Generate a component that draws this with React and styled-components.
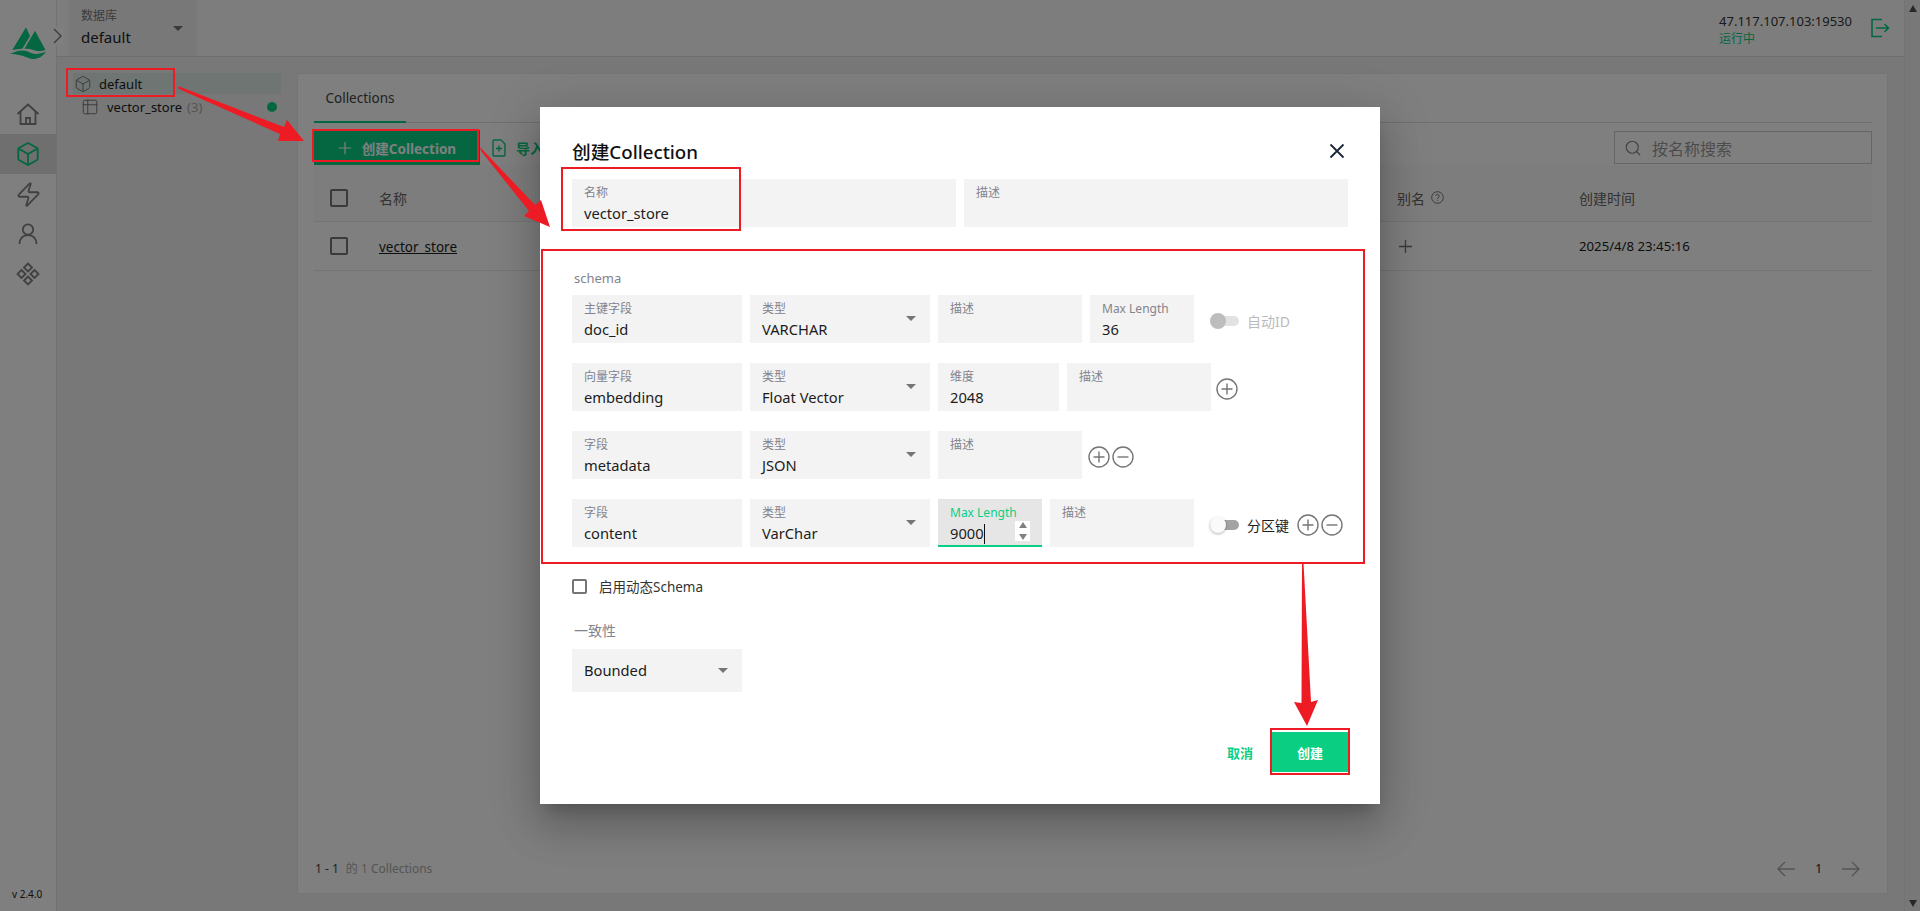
import React from 'react';
import styled, { createGlobalStyle } from 'styled-components';
import { Box, Zap, Search, Table2 } from 'lucide-react';

const GlobalStyle = createGlobalStyle`
  html, body {
    margin: 0;
    padding: 0;
    overflow: hidden;
    background: #f0f0f0;
    font-family: "Noto Sans", "Noto Sans CJK SC", sans-serif;
    color: #1c1c1c;
  }
  * { box-sizing: border-box; }
`;

const green = '#0acf83';

const Page = styled.div`
  width: 1920px;
  height: 911px;
  display: flex;
  position: relative;
  overflow: hidden;
`;

const Sidebar = styled.aside`
  width: 57px;
  flex: none;
  background: #fff;
  border-right: 1px solid #e4e4e4;
  display: flex;
  flex-direction: column;
  position: relative;
`;

const LogoWrap = styled.div`
  height: 94px;
  padding: 26px 0 0 9px;
`;

const NavItem = styled.div`
  height: 40px;
  display: flex;
  align-items: center;
  justify-content: center;
  color: ${p => (p.$active ? green : '#808080')};
  background: ${p => (p.$active ? '#dedede' : 'transparent')};
`;

const Version = styled.div`
  margin-top: auto;
  padding: 0 0 9px 12px;
  font-size: 10px;
  line-height: 16px;
  color: #222;
`;

const CollapseButton = styled.div`
  position: absolute;
  left: 50px;
  top: 27px;
  width: 14px;
  height: 18px;
  background: #fff;
  color: #777;
  display: flex;
  align-items: center;
  justify-content: center;
  z-index: 2;
`;

const Main = styled.div`
  flex: 1;
  min-width: 0;
  display: flex;
  flex-direction: column;
`;

const Header = styled.header`
  height: 57px;
  flex: none;
  background: #fbfbfb;
  border-bottom: 1px solid #dcdcdc;
  display: flex;
  justify-content: space-between;
  padding: 0 14px 0 12px;
`;

const DbSelect = styled.div`
  width: 128px;
  height: 56px;
  background: #f1f1f1;
  padding: 8px 0 0 12px;
  position: relative;
`;

const DbLabel = styled.div`
  font-size: 12px;
  line-height: 16px;
  color: #777;
`;

const DbValue = styled.div`
  font-size: 15px;
  line-height: 26px;
  color: #222;
`;

const Caret = styled.span`
  position: absolute;
  right: ${p => p.$right}px;
  top: ${p => p.$top};
  width: 0;
  height: 0;
  border-left: 5px solid transparent;
  border-right: 5px solid transparent;
  border-top: 5px solid #757575;
`;

const Connection = styled.div`
  display: flex;
  align-items: center;
  gap: 18px;
`;

const ConnectionInfo = styled.div`
  margin-top: 4px;
`;

const ConnectionText = styled.div`
  font-size: 13px;
  line-height: 18px;
  color: #333;
`;

const ConnectionState = styled.div`
  font-size: 12px;
  line-height: 18px;
  color: ${green};
`;

const Body = styled.div`
  flex: 1;
  display: flex;
  padding: 16px 16px 17px 0;
  min-height: 0;
`;

const Tree = styled.nav`
  width: 240px;
  flex: none;
  padding: 0 16px 0 16px;
`;

const TreeRow = styled.div`
  height: ${p => p.$h}px;
  display: flex;
  align-items: center;
  font-size: 13px;
  color: #1c1c1c;
  padding-left: ${p => p.$indent}px;
  background: ${p => (p.$active ? '#dcebe5' : 'transparent')};
  gap: ${p => p.$gap}px;
`;

const TreeCount = styled.span`
  color: #aaa;
  margin-left: 5px;
`;

const StatusDot = styled.span`
  width: 10px;
  height: 10px;
  border-radius: 50%;
  background: ${green};
  margin-left: auto;
  margin-right: 4px;
`;

const Card = styled.section`
  flex: 1;
  min-width: 0;
  background: #fff;
  border: 1px solid #e8e8e8;
  padding: 0 15px 0 16px;
  display: flex;
  flex-direction: column;
`;

const Tabs = styled.div`
  height: 49px;
  flex: none;
  border-bottom: 1px solid #dcdcdc;
  display: flex;
`;

const Tab = styled.div`
  width: 92px;
  height: 49px;
  border-bottom: 2px solid ${green};
  font-size: 13.5px;
  line-height: 48px;
  text-align: center;
  color: #444;
`;

const Toolbar = styled.div`
  margin-top: 7px;
  height: 35px;
  flex: none;
  display: flex;
  align-items: flex-start;
`;

const CreateButton = styled.div`
  width: 166px;
  height: 35px;
  background: ${green};
  color: #fff;
  display: flex;
  align-items: center;
  justify-content: center;
  gap: 10px;
  font-size: 13.5px;
  font-weight: 700;
`;

const ImportButton = styled.div`
  margin-left: 12px;
  height: 35px;
  display: flex;
  align-items: center;
  gap: 10px;
  color: ${green};
  font-size: 14px;
  font-weight: 700;
`;

const SearchBox = styled.div`
  margin: 1px 0 0 auto;
  width: 258px;
  height: 33px;
  border: 1px solid #ccc;
  display: flex;
  align-items: center;
  gap: 10px;
  padding-left: 9px;
  color: #999;
  font-size: 16px;
`;

const TableRow = styled.div`
  display: grid;
  grid-template-columns: 65px 1018px 182px 1fr;
  height: ${p => p.$h}px;
  flex: none;
  align-items: center;
  border-bottom: 1px solid #e6e6e6;
  background: ${p => (p.$head ? '#fbfbfb' : '#fff')};
  padding-top: ${p => (p.$head ? 9 : 0)}px;
  font-size: 14px;
  color: ${p => (p.$head ? '#666' : '#1c1c1c')};
`;

const CellCheck = styled.div`
  padding-left: 16px;
`;

const Check = styled.span`
  display: block;
  width: ${p => p.$size}px;
  height: ${p => p.$size}px;
  border: 2px solid #757575;
  border-radius: 2px;
`;

const NameLink = styled.span`
  text-decoration: underline;
  font-size: 13.5px;
`;

const DateCell = styled.div`
  font-size: 13.2px;
`;

const AliasHead = styled.div`
  display: flex;
  align-items: center;
  gap: 6px;
`;

const AddAlias = styled.div`
  color: #777;
  padding-left: 1px;
  display: flex;
`;

const CardFooter = styled.div`
  margin-top: auto;
  height: 33px;
  flex: none;
  display: flex;
  align-items: flex-start;
  justify-content: space-between;
  font-size: 12px;
  line-height: 18px;
  padding-left: 1px;
  color: #aaa;
`;

const RangeText = styled.span`
  color: #444;
  margin-right: 7px;
`;

const Pager = styled.div`
  display: flex;
  align-items: center;
  gap: 20px;
  padding-right: 12px;
  color: #222;
`;

const ArrowBtn = styled.span`
  display: flex;
  color: #aaa;
`;

const Scrollbar = styled.div`
  width: 16px;
  flex: none;
  background: #f1f1f1;
  border-left: 1px solid #e8e8e8;
  display: flex;
  flex-direction: column;
  justify-content: space-between;
  align-items: center;
  padding: 5px 0 4px;
`;

const ScrollArrow = styled.span`
  width: 0;
  height: 0;
  border-left: 4.5px solid transparent;
  border-right: 4.5px solid transparent;
  border-${p => (p.$up ? 'bottom' : 'top')}: 7px solid #505050;
`;

/* modal */

const Overlay = styled.div`
  position: absolute;
  inset: 0;
  background: rgba(0, 0, 0, 0.5);
  display: flex;
  align-items: center;
  justify-content: center;
  z-index: 5;
`;

const Modal = styled.div`
  width: 840px;
  height: 697px;
  background: #fff;
  padding: 0 32px;
  display: flex;
  flex-direction: column;
  box-shadow: 0 11px 15px -7px rgba(0, 0, 0, 0.2), 0 24px 38px 3px rgba(0, 0, 0, 0.14), 0 9px 46px 8px rgba(0, 0, 0, 0.12);
`;

const ModalHead = styled.div`
  height: 72px;
  flex: none;
  display: flex;
  justify-content: space-between;
  padding-top: 32px;
`;

const ModalTitle = styled.div`
  font-size: 18.7px;
  line-height: 26px;
  font-weight: 500;
  color: #111;
`;

const CloseButton = styled.div`
  margin: 3px 3px 0 0;
  color: #1b2638;
  height: 20px;
`;

const Row = styled.div`
  display: flex;
  gap: 8px;
  align-items: center;
  height: 48px;
  flex: none;
`;

const Field = styled.div`
  width: ${p => p.$w}px;
  flex: ${p => (p.$w ? 'none' : 1)};
  height: ${p => p.$h || 48}px;
  background: ${p => (p.$focus ? '#e6e6e6' : '#f3f3f3')};
  border-bottom: ${p => (p.$focus ? `2px solid ${green}` : 'none')};
  padding: 6px 12px 0;
  position: relative;
`;

const FieldLabel = styled.div`
  font-size: 12px;
  line-height: 16px;
  color: ${p => (p.$focus ? green : '#82838e')};
`;

const FieldValue = styled.div`
  font-size: 14.7px;
  line-height: 24px;
  margin-top: ${p => p.$mt ?? 0}px;
  color: #1c1c1c;
`;

const TextCursor = styled.span`
  display: inline-block;
  width: 1px;
  height: 20px;
  background: #111;
  vertical-align: -5px;
`;

const Spinner = styled.div`
  position: absolute;
  right: 12px;
  top: 22px;
  width: 15px;
  height: 20px;
  background: #fff;
  display: flex;
  flex-direction: column;
  align-items: center;
  justify-content: space-between;
  padding: 1px 0;
`;

const SpinArrow = styled.span`
  width: 0;
  height: 0;
  border-left: 4px solid transparent;
  border-right: 4px solid transparent;
  border-${p => (p.$up ? 'bottom' : 'top')}: 6px solid #808080;
`;

const SectionLabel = styled.div`
  font-size: ${p => p.$size}px;
  line-height: 16px;
  color: #82838e;
  padding-left: 2px;
  margin-top: ${p => p.$mt}px;
  margin-bottom: ${p => p.$mb}px;
`;

const RowGroup = styled.div`
  display: flex;
  flex-direction: column;
  gap: 20px;
`;

const Side = styled.div`
  display: flex;
  align-items: center;
  margin-top: 4px;
  margin-left: ${p => p.$ml}px;
`;

const ToggleTrack = styled.span`
  width: 29px;
  height: 10px;
  border-radius: 5px;
  background: ${p => (p.$disabled ? '#e2e2e2' : '#a3a3a3')};
  position: relative;
  display: block;
  flex: none;
`;

const ToggleThumb = styled.span`
  position: absolute;
  left: 0;
  top: -3px;
  width: 16px;
  height: 16px;
  border-radius: 50%;
  background: ${p => (p.$disabled ? '#bdbdbd' : '#fafafa')};
  box-shadow: ${p => (p.$disabled ? 'none' : '0 1px 3px rgba(0,0,0,.3)')};
`;

const ToggleText = styled.span`
  margin-left: 8px;
  width: ${p => p.$w}px;
  font-size: 14px;
  white-space: nowrap;
  color: ${p => (p.$disabled ? '#bbb' : '#1c1c1c')};
`;

const CircleBtn = styled.svg`
  width: 24px;
  height: 24px;
  display: block;
  flex: none;
  color: #757575;
`;

const DynamicRow = styled.div`
  display: flex;
  align-items: center;
  margin-top: 29px;
  height: 20px;
  font-size: 13.5px;
  color: #333;
  gap: 12px;
`;

const FooterBar = styled.div`
  margin-top: 40px;
  display: flex;
  justify-content: flex-end;
  align-items: center;
  gap: 19px;
`;

const CancelBtn = styled.div`
  font-size: 13px;
  font-weight: 700;
  color: ${green};
`;

const SubmitBtn = styled.div`
  width: 76px;
  height: 40px;
  background: ${green};
  color: #fff;
  font-size: 13px;
  font-weight: 700;
  display: flex;
  align-items: center;
  justify-content: center;
`;

/* red annotations drawn on top of the screenshot */

const Mark = styled.div`
  position: absolute;
  left: ${p => p.$x}px;
  top: ${p => p.$y}px;
  width: ${p => p.$w}px;
  height: ${p => p.$h}px;
  border: 2px solid #ed1c24;
  z-index: 10;
`;

const ArrowLayer = styled.svg`
  position: absolute;
  left: 0;
  top: 0;
  width: 1920px;
  height: 911px;
  z-index: 10;
  pointer-events: none;
`;

const Logo = () => (
  <svg width="38" height="34" viewBox="0 0 38 34" fill="#0acf83">
    <path d="M17 1.3 L21 10 L13.5 22.5 L3.3 24 Z" />
    <path d="M26 4.7 L36.5 24 C32 25.5 28 25.5 24 24 C21 23 18 22.5 15.3 23 Z" />
    <path d="M1 28 C6 25.5 10 24.5 13 24.5 C19 24.5 22 28 27 28 C30.5 28 34 27 37 25.5 C34 30.5 29 33 24 33 C19 33 16 28.5 1 28 Z" />
  </svg>
);

const HomeIcon = () => (
  <svg width="24" height="24" viewBox="0 0 24 24" fill="none" stroke="currentColor" strokeWidth="1.8">
    <path d="M1.5 12 L12 2.5 L22.5 12" />
    <path d="M4.5 9.5 V22 H19.5 V9.5" />
    <path d="M10 22 V16 H14 V22" />
  </svg>
);

const UserIcon = () => (
  <svg width="24" height="24" viewBox="0 0 24 24" fill="none" stroke="currentColor" strokeWidth="1.8">
    <circle cx="12" cy="7.5" r="5.2" />
    <path d="M3.5 22 C3.5 16.5 7 13 12 13 C17 13 20.5 16.5 20.5 22" />
  </svg>
);

const DiamondsIcon = () => (
  <svg width="24" height="24" viewBox="0 0 24 24" fill="none" stroke="currentColor" strokeWidth="1.8">
    <path d="M12 1.5 l4 4 -4 4 -4 -4 z" />
    <path d="M12 14.5 l4 4 -4 4 -4 -4 z" />
    <path d="M5.5 8 l4 4 -4 4 -4 -4 z" />
    <path d="M18.5 8 l4 4 -4 4 -4 -4 z" />
  </svg>
);

const LogoutIcon = () => (
  <svg width="20" height="20" viewBox="0 0 20 20" fill="none" stroke={green} strokeWidth="1.6">
    <path d="M12 1.5 H2 V18.5 H12" />
    <path d="M6 10 H18.5 M14.5 6 L18.5 10 L14.5 14" />
  </svg>
);

const FilePlusIcon = () => (
  <svg width="14" height="18" viewBox="0 0 14 18" fill="none" stroke="currentColor" strokeWidth="1.4">
    <path d="M1 2 a1 1 0 0 1 1 -1 H9 L13 5 V16 a1 1 0 0 1 -1 1 H2 a1 1 0 0 1 -1 -1 Z" />
    <path d="M4 9.5 H10 M7 6.5 V12.5" />
  </svg>
);

const HelpIcon = () => (
  <svg width="13" height="13" viewBox="0 0 13 13" fill="none" stroke="#666" strokeWidth="0.9">
    <circle cx="6.5" cy="6.5" r="5.8" />
    <path d="M4.8 5 a1.7 1.7 0 1 1 2.6 1.5 c-.6 .4 -.9 .7 -.9 1.5 M6.5 9.2 V10" />
  </svg>
);

const PlusLines = ({ size = 16, width = 1.4 }) => (
  <svg width={size} height={size} viewBox="0 0 16 16" fill="none" stroke="currentColor" strokeWidth={width}>
    <path d="M8 1 V15 M1 8 H15" />
  </svg>
);

const PagerArrow = ({ flip }) => (
  <svg width="18" height="16" viewBox="0 0 18 16" fill="none" stroke="currentColor" strokeWidth="1.4">
    {flip ? <path d="M0 8 H17 M10 1 L17 8 L10 15" /> : <path d="M18 8 H1 M8 1 L1 8 L8 15" />}
  </svg>
);

const CirclePlus = () => (
  <CircleBtn viewBox="0 0 24 24" fill="none" stroke="currentColor" strokeWidth="1.4">
    <circle cx="12" cy="12" r="10" />
    <path d="M12 6.5 V17.5 M6.5 12 H17.5" />
  </CircleBtn>
);

const CircleMinus = () => (
  <CircleBtn viewBox="0 0 24 24" fill="none" stroke="currentColor" strokeWidth="1.4">
    <circle cx="12" cy="12" r="10" />
    <path d="M6.5 12 H17.5" />
  </CircleBtn>
);

const TextField = ({ label, value, w, focus, children }) => (
  <Field $w={w} $focus={focus}>
    <FieldLabel $focus={focus}>{label}</FieldLabel>
    <FieldValue>{value}{children}</FieldValue>
  </Field>
);

const SelectField = ({ label, value }) => (
  <Field $w={180}>
    <FieldLabel>{label}</FieldLabel>
    <FieldValue>{value}</FieldValue>
    <Caret $right={14} $top="21px" />
  </Field>
);

const Toggle = ({ disabled, label, w }) => (
  <>
    <ToggleTrack $disabled={disabled}><ToggleThumb $disabled={disabled} /></ToggleTrack>
    <ToggleText $disabled={disabled} $w={w}>{label}</ToggleText>
  </>
);

export default function App() {
  return (
    <Page>
      <GlobalStyle />
      <Sidebar>
        <LogoWrap><Logo /></LogoWrap>
        <NavItem><HomeIcon /></NavItem>
        <NavItem $active><Box size={26} strokeWidth={1.7} /></NavItem>
        <NavItem><Zap size={27} strokeWidth={1.6} /></NavItem>
        <NavItem><UserIcon /></NavItem>
        <NavItem><DiamondsIcon /></NavItem>
        <Version>v 2.4.0</Version>
        <CollapseButton>
          <svg width="9" height="16" viewBox="0 0 9 16" fill="none" stroke="currentColor" strokeWidth="1.4">
            <path d="M1 1 L8 8 L1 15" />
          </svg>
        </CollapseButton>
      </Sidebar>

      <Main>
        <Header>
          <DbSelect>
            <DbLabel>数据库</DbLabel>
            <DbValue>default</DbValue>
            <Caret $right={14} $top="26px" />
          </DbSelect>
          <Connection>
            <ConnectionInfo>
              <ConnectionText>47.117.107.103:19530</ConnectionText>
              <ConnectionState>运行中</ConnectionState>
            </ConnectionInfo>
            <LogoutIcon />
          </Connection>
        </Header>
        <Body>
          <Tree>
            <TreeRow $h={21} $indent={1} $gap={7} $active>
              <Box size={18} strokeWidth={1.3} color="#777" />
              <span>default</span>
            </TreeRow>
            <TreeRow $h={26} $indent={8} $gap={8}>
              <Table2 size={18} strokeWidth={1.3} color="#777" />
              <span>vector_store<TreeCount>(3)</TreeCount></span>
              <StatusDot />
            </TreeRow>
          </Tree>
          <Card>
            <Tabs><Tab>Collections</Tab></Tabs>
            <Toolbar>
              <CreateButton><PlusLines size={14} />创建Collection</CreateButton>
              <ImportButton><FilePlusIcon />导入文件</ImportButton>
              <SearchBox><Search size={18} strokeWidth={1.6} color="#888" />按名称搜索</SearchBox>
            </Toolbar>
            <TableRow $h={57} $head>
              <CellCheck><Check $size={18} /></CellCheck>
              <div>名称</div>
              <AliasHead>别名 <HelpIcon /></AliasHead>
              <div>创建时间</div>
            </TableRow>
            <TableRow $h={49}>
              <CellCheck><Check $size={18} /></CellCheck>
              <div><NameLink>vector_store</NameLink></div>
              <AddAlias><PlusLines size={15} /></AddAlias>
              <DateCell>2025/4/8 23:45:16</DateCell>
            </TableRow>
            <CardFooter>
              <span><RangeText>1 - 1</RangeText>的 1 Collections</span>
              <Pager>
                <ArrowBtn><PagerArrow /></ArrowBtn>
                <span>1</span>
                <ArrowBtn><PagerArrow flip /></ArrowBtn>
              </Pager>
            </CardFooter>
          </Card>
        </Body>
      </Main>

      <Scrollbar>
        <ScrollArrow $up />
        <ScrollArrow />
      </Scrollbar>

      <Overlay>
        <Modal>
          <ModalHead>
            <ModalTitle>创建Collection</ModalTitle>
            <CloseButton>
              <svg width="16" height="16" viewBox="0 0 16 16" fill="none" stroke="currentColor" strokeWidth="1.8">
                <path d="M1.5 1.5 L14.5 14.5 M14.5 1.5 L1.5 14.5" />
              </svg>
            </CloseButton>
          </ModalHead>
          <Row>
            <TextField label="名称" value="vector_store" />
            <TextField label="描述" />
          </Row>
          <SectionLabel $size={13} $mt={43} $mb={9}>schema</SectionLabel>
          <RowGroup>
            <Row>
              <TextField label="主键字段" value="doc_id" w={170} />
              <SelectField label="类型" value="VARCHAR" />
              <TextField label="描述" w={144} />
              <TextField label="Max Length" value="36" w={104} />
              <Side $ml={8}><Toggle disabled label="自动ID" w={50} /></Side>
            </Row>
            <Row>
              <TextField label="向量字段" value="embedding" w={170} />
              <SelectField label="类型" value="Float Vector" />
              <TextField label="维度" value="2048" w={121} />
              <TextField label="描述" w={144} />
              <Side $ml={-4}><CirclePlus /></Side>
            </Row>
            <Row>
              <TextField label="字段" value="metadata" w={170} />
              <SelectField label="类型" value="JSON" />
              <TextField label="描述" w={144} />
              <Side $ml={-3}><CirclePlus /><CircleMinus /></Side>
            </Row>
            <Row>
              <TextField label="字段" value="content" w={170} />
              <SelectField label="类型" value="VarChar" />
              <TextField label="Max Length" value="9000" w={104} focus>
                <TextCursor />
                <Spinner><SpinArrow $up /><SpinArrow /></Spinner>
              </TextField>
              <TextField label="描述" w={144} />
              <Side $ml={8}>
                <Toggle label="分区键" w={49} />
                <CirclePlus /><CircleMinus />
              </Side>
            </Row>
          </RowGroup>
          <DynamicRow><Check $size={15} />启用动态Schema</DynamicRow>
          <SectionLabel $size={14} $mt={27} $mb={10}>一致性</SectionLabel>
          <Field $w={170} $h={43}>
            <FieldValue $mt={3}>Bounded</FieldValue>
            <Caret $right={14} $top="19px" />
          </Field>
          <FooterBar>
            <CancelBtn>取消</CancelBtn>
            <SubmitBtn>创建</SubmitBtn>
          </FooterBar>
        </Modal>
      </Overlay>

      <Mark $x={66} $y={68} $w={109} $h={29} />
      <Mark $x={312} $y={129} $w={167} $h={33} />
      <Mark $x={561} $y={167} $w={180} $h={64} />
      <Mark $x={541} $y={249} $w={824} $h={315} />
      <Mark $x={1270} $y={728} $w={80} $h={47} />
      <ArrowLayer viewBox="0 0 1920 911">
        <polygon fill="#ed1c24" points="178,86 179,89 280,134 278,141 304,141 287,120 284,127" />
        <polygon fill="#ed1c24" points="480,147 481,151 529,211 524,216 550,227 541,200 535,205" />
        <polygon fill="#ed1c24" points="1302,563 1303.5,563 1311,702 1318,700 1307,726 1294,702 1301.5,703" />
      </ArrowLayer>
    </Page>
  );
}
